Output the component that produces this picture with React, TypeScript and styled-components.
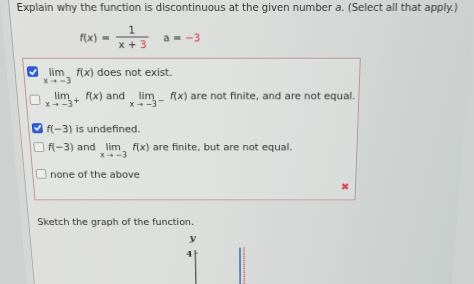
import styled, { createGlobalStyle } from 'styled-components';

// the reference is a photo of a screen: the page is laid out flat and then
// projected with a slight perspective + shear so rows drift right going down
const PERSPECTIVE = 0.000363;
const SHEAR = 0.094;

const GlobalStyle = createGlobalStyle`
  html, body {
    margin: 0;
    padding: 0;
    overflow: hidden;
    background: #cdd2d0;
  }
  body {
    font-family: "DejaVu Sans", Verdana, sans-serif;
    color: #2f3131;
  }
`;

const Page = styled.div`
  width: 474px;
  height: 320px;
  display: flex;
  transform-origin: 0 0;
  transform: matrix3d(1, 0, 0, 0, ${SHEAR}, 1, 0, ${PERSPECTIVE}, 0, 0, 1, 0, 0, 0, 0, 1);
  background: linear-gradient(100deg, #e0e1df 0%, #dcdedc 45%, #c8cecc 100%);
`;

const Gutter = styled.div`
  width: 8px;
  flex: none;
  background: #d4d7d5;
  border-right: 1px solid #a9acab;
`;

const Panel = styled.div`
  flex: 1;
  display: flex;
  flex-direction: column;
  padding: 1px 0 0 7px;
`;

const Prompt = styled.div`
  font-size: 10.1px;
  line-height: 14px;
  white-space: nowrap;
`;

const Formula = styled.div`
  display: flex;
  align-items: center;
  margin: 9px 0 0 61px;
  font-size: 10.5px;
`;

const Equals = styled.span`
  margin-left: 4px;
`;

const Fraction = styled.div`
  display: flex;
  flex-direction: column;
  align-items: center;
  width: 33px;
  margin: 0 15px 0 6px;
  line-height: 13px;
`;

const Bar = styled.div`
  align-self: stretch;
  height: 1px;
  margin-bottom: 1px;
  background: #4a4c4c;
`;

const Red = styled.span`
  color: #cf3b3e;
`;

const Choices = styled.div`
  box-sizing: border-box;
  width: 346px;
  height: 158px;
  margin: 7px 0 0 1px;
  padding: 7px 0 0 3px;
  border: 1px solid #b99598;
  background: rgba(236, 238, 237, 0.25);
  display: flex;
  flex-direction: column;
`;

const Choice = styled.div<{ $h: number }>`
  display: flex;
  align-items: flex-start;
  height: ${(p) => p.$h}px;
  font-size: 10.5px;
  line-height: 14px;
  white-space: pre;
`;

const Check = styled.span<{ $checked?: boolean; $top: number }>`
  box-sizing: border-box;
  flex: none;
  width: 11px;
  height: 11px;
  margin: ${(p) => p.$top}px 4px 0 0;
  border-radius: 2px;
  display: flex;
  align-items: center;
  justify-content: center;
  background: ${(p) => (p.$checked ? '#2d5ed6' : '#eceeed')};
  border: 1px solid ${(p) => (p.$checked ? '#2450bd' : '#9c9f9e')};
`;

const LimBlock = styled.span`
  display: flex;
  flex-direction: column;
  align-items: center;
  margin: 0 6px 0 1px;
`;

const LimWord = styled.span`
  line-height: 14px;
`;

const LimSub = styled.span`
  font-size: 8px;
  line-height: 9px;
  margin-top: -2px;
  white-space: nowrap;
`;

const Side = styled.sup`
  font-size: 8px;
  line-height: 0;
  margin-left: 1px;
`;

const Footer = styled.div`
  display: flex;
  justify-content: flex-end;
  padding-right: 6px;
  height: 12px;
  align-items: center;
`;

const Wrong = styled.span`
  color: #d8434f;
  font-size: 11px;
  line-height: 12px;
  font-weight: bold;
`;

const Sketch = styled.div`
  margin: 18px 0 0 2px;
  font-size: 10.3px;
  line-height: 14px;
`;

const GraphArea = styled.svg`
  display: block;
  width: 458px;
  height: 72px;
`;

const Fx = ({ arg }: { arg?: string }) => (
  <span>
    <i>f</i>({arg ? arg : <i>x</i>})
  </span>
);

const Tick = () => (
  <svg width="8" height="8" viewBox="0 0 8 8">
    <path d="M1.2 4.2 L3.2 6.3 L6.9 1.6" fill="none" stroke="#fff" strokeWidth="1.7" strokeLinecap="round" strokeLinejoin="round" />
  </svg>
);

const Limit = ({ side }: { side?: string }) => (
  <LimBlock>
    <LimWord>lim</LimWord>
    <LimSub>
      x → −3{side && <Side>{side}</Side>}
    </LimSub>
  </LimBlock>
);

const App = () => {
  return (
    <Page>
      <GlobalStyle />
      <Gutter />
      <Panel>
        <Prompt>
          Explain why the function is discontinuous at the given number <i>a</i>. (Select all that apply.)
        </Prompt>
        <Formula>
          <Fx />
          <Equals>=</Equals>
          <Fraction>
            <span>1</span>
            <Bar />
            <span>
              x + <Red>3</Red>
            </span>
          </Fraction>
          <span>
            a = <Red>−3</Red>
          </span>
        </Formula>

        <Choices>
          <Choice $h={24.5}>
            <Check $checked $top={1}>
              <Tick />
            </Check>
            <Limit />
            <Fx />
            {' does not exist.'}
          </Choice>
          <Choice $h={36}>
            <Check $top={6}></Check>
            <Limit side="+" />
            <Fx />
            {' and '}
            <Limit side="−" />
            <Fx />
            {' are not finite, and are not equal.'}
          </Choice>
          <Choice $h={20}>
            <Check $checked $top={1}>
              <Tick />
            </Check>
            <Fx arg="−3" />
            {' is undefined.'}
          </Choice>
          <Choice $h={31.5}>
            <Check $top={2}></Check>
            <Fx arg="−3" />
            {' and '}
            <Limit />
            <Fx />
            {' are finite, but are not equal.'}
          </Choice>
          <Choice $h={16}>
            <Check $top={1}></Check>
            {'none of the above'}
          </Choice>
          <Footer>
            <Wrong>✖</Wrong>
          </Footer>
        </Choices>

        <Sketch>Sketch the graph of the function.</Sketch>
        <GraphArea viewBox="0 0 458 72">
          <text x="170" y="16" fontFamily="'DejaVu Serif', serif" fontStyle="italic" fontWeight="bold" fontSize="11" fill="#333" textAnchor="middle">
            y
          </text>
          <text x="166" y="35" fontFamily="'DejaVu Serif', serif" fontWeight="bold" fontSize="10" fill="#333" textAnchor="middle">
            4
          </text>
          <line x1="172.5" y1="27" x2="172.5" y2="72" stroke="#3a3d3d" strokeWidth="1.2" />
          <line x1="172.5" y1="31" x2="175.5" y2="31" stroke="#3a3d3d" strokeWidth="1" />
          <line x1="222" y1="24" x2="222" y2="72" stroke="#2f73b4" strokeWidth="1.6" />
          <line x1="226.5" y1="24" x2="226.5" y2="72" stroke="#d2474b" strokeWidth="1.5" strokeDasharray="1.5 1" />
        </GraphArea>
      </Panel>
    </Page>
  );
};

export default App;
